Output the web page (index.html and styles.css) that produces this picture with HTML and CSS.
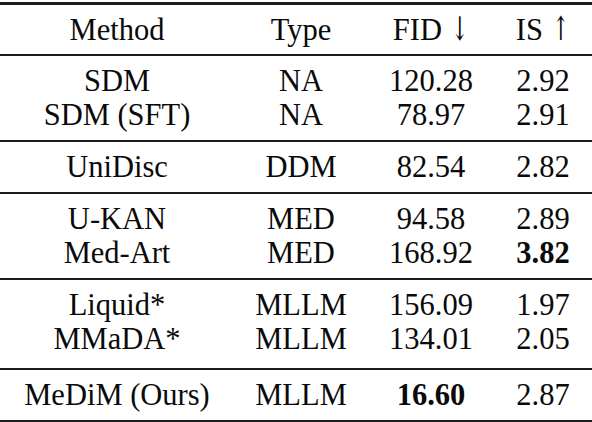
FILE: index.html
```html
<!DOCTYPE html>
<html lang="en">
<head>
<meta charset="UTF-8" />
<meta name="viewport" content="width=device-width, initial-scale=1" />
<title>Generation results</title>
<link rel="stylesheet" href="styles.css">
</head>
<body>
<table class="results">
  <colgroup>
    <col class="col-method">
    <col class="col-type">
    <col class="col-fid">
    <col class="col-is">
  </colgroup>
  <thead>
    <tr>
      <th>Method</th>
      <th>Type</th>
      <th>FID <span class="arrow">↓</span></th>
      <th>IS <span class="arrow">↑</span></th>
    </tr>
  </thead>
  <tbody>
    <tr><td>SDM</td><td>NA</td><td>120.28</td><td>2.92</td></tr>
    <tr><td>SDM (SFT)</td><td>NA</td><td>78.97</td><td>2.91</td></tr>
  </tbody>
  <tbody>
    <tr><td>UniDisc</td><td>DDM</td><td>82.54</td><td>2.82</td></tr>
  </tbody>
  <tbody>
    <tr><td>U-KAN</td><td>MED</td><td>94.58</td><td>2.89</td></tr>
    <tr><td>Med-Art</td><td>MED</td><td>168.92</td><td class="best">3.82</td></tr>
  </tbody>
  <tbody class="mllm">
    <tr><td>Liquid*</td><td>MLLM</td><td>156.09</td><td>1.97</td></tr>
    <tr><td>MMaDA*</td><td>MLLM</td><td>134.01</td><td>2.05</td></tr>
  </tbody>
  <tbody class="ours">
    <tr><td>MeDiM (Ours)</td><td>MLLM</td><td class="best">16.60</td><td>2.87</td></tr>
  </tbody>
</table>
</body>
</html>
```

FILE: styles.css
```css
:root {
  --ink: #0a0a0a;
  --rule: #1a1a1a;
  --font-family: 'Liberation Serif', 'Times New Roman', serif;
}

* {
  box-sizing: border-box;
}

body {
  margin: 0;
  background: #fff;
  color: var(--ink);
  font-family: var(--font-family);
}

.results {
  width: 592px;
  margin-top: 2px;
  border-collapse: collapse;
  table-layout: fixed;
  font-size: 30.5px;
  border-top: 3px solid var(--rule);
  border-bottom: 3px solid var(--rule);
}

.col-method { width: 234px; }
.col-type { width: 134px; }
.col-fid { width: 126px; }
.col-is { width: 98px; }

.results th,
.results td {
  padding: 0;
  line-height: 34px;
  text-align: center;
  font-weight: normal;
  white-space: nowrap;
}

.results thead th {
  padding: 7px 0;
}

.results thead,
.results tbody {
  border-bottom: 2px solid var(--rule);
}

.results tbody.ours {
  border-bottom: 3px solid var(--rule);
}

.results tbody tr:first-child td {
  padding-top: 8px;
}

.results tbody tr:last-child td {
  padding-bottom: 8px;
}

/* this group sits a little looser in the source table */
.results tbody.mllm tr:last-child td {
  padding-bottom: 12px;
}

.results td.best {
  font-weight: bold;
}

/* tall thin arrows, like the math font of the paper */
.arrow {
  display: inline-block;
  font-family: 'DejaVu Serif', serif;
  font-size: 33px;
  line-height: 34px;
  transform: scaleX(0.62);
  transform-origin: center;
  margin-left: -4px;
  margin-right: -4px;
}
```
